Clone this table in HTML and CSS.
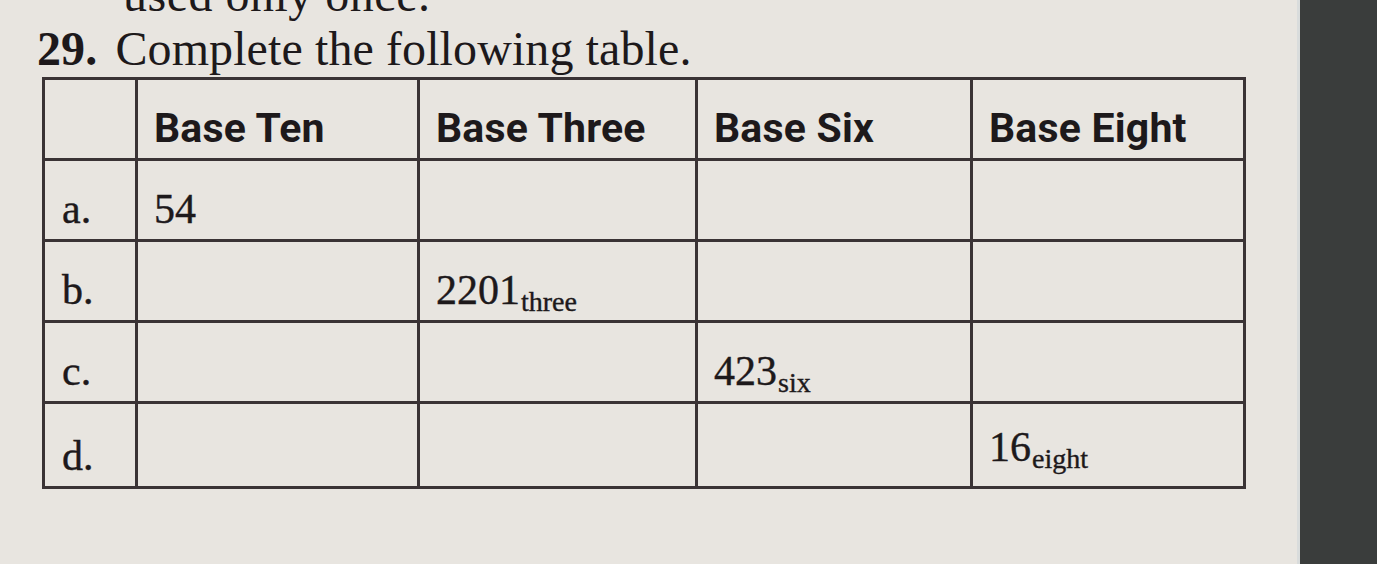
FILE: index.html
```html
<!DOCTYPE html>
<html lang="en">
<head>
<meta charset="utf-8">
<title>Complete the following table</title>
<link rel="stylesheet" href="styles.css">
</head>
<body>
<div class="screen">
  <main class="sheet">
    <p class="prev">used only once.</p>
    <h1 class="question"><span class="num">29.</span> Complete the following table.</h1>
    <table class="bases">
      <colgroup>
        <col class="c-label">
        <col class="c-ten">
        <col class="c-three">
        <col class="c-six">
        <col class="c-eight">
      </colgroup>
      <thead>
        <tr class="r-head">
          <th></th>
          <th>Base Ten</th>
          <th>Base Three</th>
          <th>Base Six</th>
          <th>Base Eight</th>
        </tr>
      </thead>
      <tbody>
        <tr class="r-a">
          <td>a.</td>
          <td>54</td>
          <td></td>
          <td></td>
          <td></td>
        </tr>
        <tr class="r-b">
          <td>b.</td>
          <td></td>
          <td>2201<sub class="base">three</sub></td>
          <td></td>
          <td></td>
        </tr>
        <tr class="r-c">
          <td>c.</td>
          <td></td>
          <td></td>
          <td>423<sub class="base">six</sub></td>
          <td></td>
        </tr>
        <tr class="r-d">
          <td>d.</td>
          <td></td>
          <td></td>
          <td></td>
          <td class="up">16<sub class="base">eight</sub></td>
        </tr>
      </tbody>
    </table>
  </main>
  <div class="edge"></div>
  <div class="desk"></div>
</div>
</body>
</html>
```

FILE: styles.css
```css
html, body {
  margin: 0;
  padding: 0;
  height: 100%;
}

body {
  background: #393c3b;
  color: #1d191b;
  font-family: "Liberation Serif", "Times New Roman", serif;
  overflow: hidden;
}

.screen {
  display: flex;
  height: 564px;
}

.sheet {
  flex: 0 0 1297px;
  box-sizing: border-box;
  padding-left: 37px;
  background: #e8e5e0;
  overflow: hidden;
}

.edge {
  flex: 0 0 3px;
  background: #d9dcdc;
}

.desk {
  flex: 1;
  background: #3a3d3c;
}

.prev {
  margin: -29px 0 0 86px;
  font-size: 48px;
  line-height: 48px;
  letter-spacing: 0.5px;
}

.question {
  margin: 6px 0 0 0;
  font-size: 48px;
  line-height: 48px;
  font-weight: normal;
  letter-spacing: 0.1px;
}

.question .num {
  font-weight: bold;
  margin-right: 6px;
}

.bases {
  margin: 4px 0 0 5px;
  border-collapse: collapse;
  table-layout: fixed;
  width: 1201px;
}

.c-label { width: 93px; }
.c-ten { width: 282px; }
.c-three { width: 278px; }
.c-six { width: 275px; }
.c-eight { width: 273px; }

.bases th,
.bases td {
  border: 3px solid #3a3335;
  padding: 0 0 0 16px;
  vertical-align: top;
  text-align: left;
  box-sizing: border-box;
}

.bases th {
  font-family: Roboto, "Liberation Sans", sans-serif;
  font-weight: bold;
  font-size: 41px;
  line-height: 48px;
  padding-top: 24px;
  height: 81px;
  letter-spacing: 0.2px;
}

.bases td {
  font-size: 42px;
  line-height: 48px;
  padding-top: 24px;
  height: 81px;
  -webkit-text-stroke: 0.4px #1d191b;
}

.r-d td {
  height: 85px;
  padding-top: 28px;
}

.r-d td.up {
  padding-top: 19px;
}

.bases td:first-child {
  padding-left: 17px;
}

.base {
  font-size: 28px;
  vertical-align: -7px;
  line-height: 0;
  margin-left: 1px;
}
```
